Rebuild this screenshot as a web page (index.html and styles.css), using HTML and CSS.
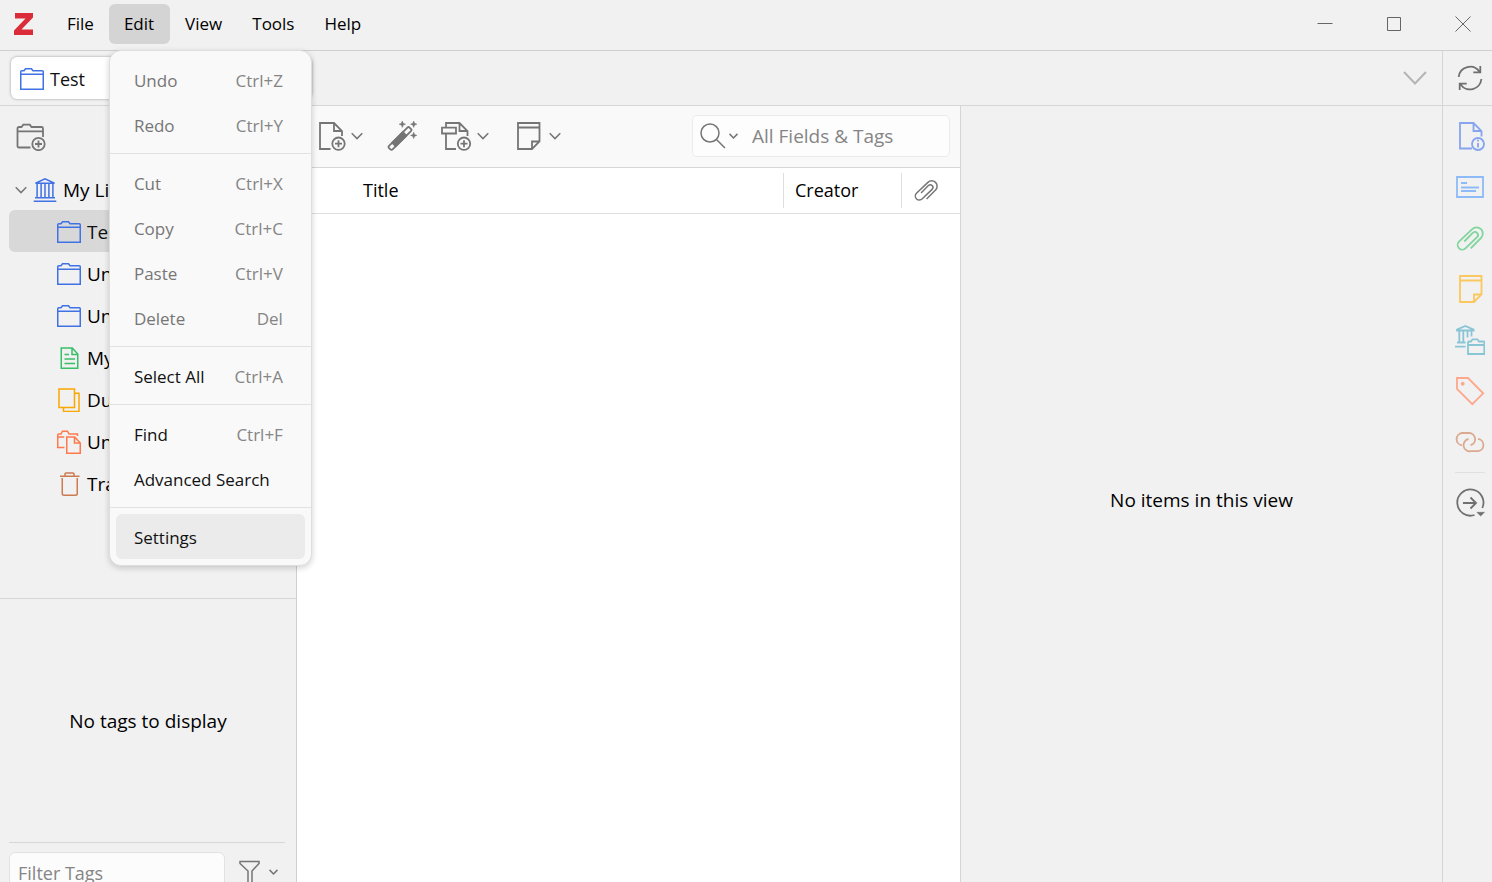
FILE: index.html
```html
<!DOCTYPE html>
<html lang="en">
<head>
<meta charset="utf-8">
<title>Test - Zotero</title>
<link rel="stylesheet" href="styles.css">
</head>
<body>
<svg class="defs" aria-hidden="true">
  <symbol id="chevron" viewBox="0 0 12 8"><path d="M.7 1.2 6 6.6l5.300-5.400"/></symbol>
  <symbol id="folder" viewBox="0 0 24 24"><path d="M.75 22.250V4.750q0-1 1-1H4L5.500 1.750h6L13 3.750h9.250q1 0 1 1v17.500zM.75 7.200h22.500"/></symbol>
  <symbol id="clip" viewBox="0 0 30 30"><path d="M15.700 25.300 26 15A6.200 6.200 0 0 0 17.200 6.200L4 18.700A4.600 4.600 0 0 0 10.700 25.200L22.300 14A3.100 3.100 0 0 0 18 9.600L9.300 18.500"/></symbol>
  <symbol id="note" viewBox="0 0 30 30"><path d="M5 2h21.500v18.500l-7.500 7.500H5zM5 6.500h21.500M26.500 20.500H19V28"/></symbol>
</svg>
<div class="app">
  <header class="titlebar">
    <svg class="logo" viewBox="0 0 20 22" aria-label="Zotero"><path d="M1 0h18v4.500L7.500 16.500H19V22H0v-4.500L11.500 5.500H1z"/></svg>
    <nav class="menubar">
      <button class="menu-button">File</button>
      <div class="menu-anchor">
        <button class="menu-button is-open">Edit</button>
        <div class="menu" role="menu">
          <div class="menu-group">
            <button class="menu-item" role="menuitem" disabled>Undo<kbd>Ctrl+Z</kbd></button>
            <button class="menu-item" role="menuitem" disabled>Redo<kbd>Ctrl+Y</kbd></button>
          </div>
          <div class="menu-group">
            <button class="menu-item" role="menuitem" disabled>Cut<kbd>Ctrl+X</kbd></button>
            <button class="menu-item" role="menuitem" disabled>Copy<kbd>Ctrl+C</kbd></button>
            <button class="menu-item" role="menuitem" disabled>Paste<kbd>Ctrl+V</kbd></button>
            <button class="menu-item" role="menuitem" disabled>Delete<kbd>Del</kbd></button>
          </div>
          <div class="menu-group">
            <button class="menu-item" role="menuitem">Select All<kbd>Ctrl+A</kbd></button>
          </div>
          <div class="menu-group">
            <button class="menu-item" role="menuitem">Find<kbd>Ctrl+F</kbd></button>
            <button class="menu-item" role="menuitem">Advanced Search</button>
          </div>
          <div class="menu-group">
            <button class="menu-item is-active" role="menuitem">Settings</button>
          </div>
        </div>
      </div>
      <button class="menu-button">View</button>
      <button class="menu-button">Tools</button>
      <button class="menu-button">Help</button>
    </nav>
    <div class="window-controls">
      <button class="window-button" aria-label="Minimize"><svg viewBox="0 0 16 16"><path d="M.5 7.500h15"/></svg></button>
      <button class="window-button" aria-label="Maximize"><svg viewBox="0 0 16 16"><path d="M1.500 1.500h13v13h-13z"/></svg></button>
      <button class="window-button" aria-label="Close"><svg viewBox="0 0 16 16"><path d="m.5.5 15 15M15.500.5l-15 15"/></svg></button>
    </div>
  </header>

  <div class="tabbar">
    <div class="tabs">
      <button class="tab"><svg class="icon-24 blue"><use href="#folder"/></svg>Test</button>
      <button class="tab-list" aria-label="List all tabs"><svg viewBox="0 0 24 14"><path d="m1 1 11 11.500L23 1"/></svg></button>
    </div>
    <button class="sync" aria-label="Sync"><svg class="icon-30" viewBox="0 0 30 30"><path d="M3.700 14A11.400 11.400 0 0 1 24.500 8.800M25.300 3v6.300h-7M26.400 16A11.400 11.400 0 0 1 5.500 21.200M4.700 27v-6.300h7"/></svg></button>
  </div>

  <main class="content">
    <aside class="sidebar">
      <div class="sidebar-tools">
        <button class="tool" aria-label="New Collection"><svg class="icon-30" viewBox="0 0 30 30"><path d="M14.500 26.500H3q-1.500 0-1.500-1.500V7.500q0-1.500 1.500-1.500h2.500L7.300 3.700h6.500L15.500 6h10q1.500 0 1.500 1.500v8.500M1.500 10.300H27"/><circle cx="22.500" cy="23" r="6.200"/><path d="M22.500 19.500v7M19 23h7"/></svg></button>
      </div>
      <ul class="tree">
        <li class="row root"><svg class="twisty"><use href="#chevron"/></svg><svg class="icon-24 blue" viewBox="0 0 24 24"><path d="M2.500 5.200 12 .9l9.500 4.300zM4.100 5.500V19M8.100 5.500V19M12 5.500V19M15.900 5.500V19M19.900 5.500V19M2 19.700h20M.7 23.200h22.600"/></svg>My Li</li>
        <li class="row is-selected"><svg class="icon-24 blue"><use href="#folder"/></svg>Tes</li>
        <li class="row"><svg class="icon-24 blue"><use href="#folder"/></svg>Un</li>
        <li class="row"><svg class="icon-24 blue"><use href="#folder"/></svg>Un</li>
        <li class="row"><svg class="icon-24 green" viewBox="0 0 24 24"><path d="M4.250 2h11l5.500 6v14.250H4.250zM15 2v6.500h5.750M7.500 8.500h4.500M7.500 13h10.500M7.500 17.500h10.500"/></svg>My</li>
        <li class="row"><svg class="icon-24 yellow" viewBox="0 0 24 24"><path d="M2 1h15.500v18.500H2zM17.500 5.250h4.500V23.500H6.500v-4"/></svg>Du</li>
        <li class="row"><svg class="icon-24 orange" viewBox="0 0 24 24"><path d="M7.500 17.500H.75V5q0-1 1-1H4L5.500 1.200h5L12 4h8.500v2M.75 7h6.500M9.750 7h8l5.500 6v10.250H9.750zM17.500 7v6h5.750"/></svg>Un</li>
        <li class="row"><svg class="icon-24 brown" viewBox="0 0 24 24"><path d="M3 4.200h19.500M8 4V2q0-1 1-1h7q1 0 1 1v2M5.250 6v15.500q0 1.750 1.750 1.750h11.500q1.750 0 1.750-1.750V6"/></svg>Tra</li>
      </ul>
      <section class="tags">
        <p class="tags-empty">No tags to display</p>
        <div class="tags-filter">
          <input class="field" type="text" placeholder="Filter Tags" aria-label="Filter Tags">
          <button class="filter-button" aria-label="Tag filter options"><svg class="icon-24" viewBox="0 0 24 24"><path d="M2 1.500h19v2L14 11v12l-4 1.500V11L2 3.500z"/></svg><svg class="chevron-small"><use href="#chevron"/></svg></button>
        </div>
      </section>
    </aside>

    <section class="items">
      <div class="toolbar">
        <button class="tool" aria-label="New Item"><svg class="icon-30" viewBox="0 0 30 30"><path d="M12.500 28H2V2h14l8 8v5M16 2v8h8"/><circle cx="20.500" cy="22.700" r="6.200"/><path d="M20.500 19.200v7M17 22.700h7"/></svg><svg class="chevron"><use href="#chevron"/></svg></button>
        <button class="tool" aria-label="Add Item by Identifier"><svg class="icon-30" viewBox="0 0 30 30"><g transform="rotate(-45 13 17.500)"><rect x="-1.500" y="15" width="29" height="5" rx="1.500"/><path class="solid" d="M4.500 15h15v5h-15z"/></g><path class="solid thin" d="m15.300 0 .9 2.300 2.300.9-2.300.9-.9 2.300-.9-2.300-2.300-.9 2.300-.9zM26.700 0l.9 2.300 2.300.9-2.300.9-.9 2.300-.9-2.300-2.300-.9 2.300-.9zM26.700 11.200l.9 2.300 2.300.9-2.300.9-.9 2.300-.9-2.300-2.300-.9 2.300-.9z"/></svg></button>
        <button class="tool" aria-label="Add Attachment"><svg class="icon-33" viewBox="0 0 33 30"><path d="M15 28H5V12.500M5 6.500V2h13.500l8 8v5M18.500 2v8h8M1 6.700h14v5.800H1z"/><circle cx="23" cy="22.700" r="6.200"/><path d="M23 19.200v7M19.500 22.700h7"/></svg><svg class="chevron"><use href="#chevron"/></svg></button>
        <button class="tool" aria-label="New Note"><svg class="icon-33" viewBox="0 0 33 30"><path d="M5 2h21.500v18.500l-7.500 7.500H5zM5 6.500h21.500M26.500 20.500H19V28"/></svg><svg class="chevron"><use href="#chevron"/></svg></button>
        <div class="search">
          <button class="search-mode" aria-label="Search mode"><svg class="search-icon" viewBox="0 0 26 26"><circle cx="10" cy="10" r="9"/><path d="m16.500 16.500 8.500 8.500"/></svg><svg class="chevron-small"><use href="#chevron"/></svg></button>
          <input class="search-input" type="text" placeholder="All Fields &amp; Tags" aria-label="All Fields &amp; Tags">
        </div>
      </div>
      <table class="items-table">
        <thead>
          <tr>
            <th class="col-title" scope="col"><div>Title</div></th>
            <th class="col-creator" scope="col"><div>Creator</div></th>
            <th class="col-clip" scope="col" aria-label="Attachments"><div><svg class="icon-26"><use href="#clip"/></svg></div></th>
          </tr>
        </thead>
      </table>
    </section>

    <section class="details"><p>No items in this view</p></section>

    <nav class="sidenav">
      <button class="nav-button blue" aria-label="Info"><svg class="icon-30" viewBox="0 0 30 30"><path d="M17 27.500H5V2h13.500l8 8v5.500M18.500 2v8h8"/><circle cx="23" cy="23" r="6"/><path d="M23 22v4.500M23 18.800v1.700"/></svg></button>
      <button class="nav-button sky" aria-label="Abstract"><svg class="icon-30" viewBox="0 0 30 30"><path d="M2 5h26v20H2zM6 11h6M6 15.500h18M6 19h15"/></svg></button>
      <button class="nav-button green" aria-label="Attachments"><svg class="icon-30"><use href="#clip"/></svg></button>
      <button class="nav-button yellow" aria-label="Notes"><svg class="icon-30"><use href="#note"/></svg></button>
      <button class="nav-button teal" aria-label="Libraries and Collections"><svg class="icon-30" viewBox="0 0 30 30"><path d="M2 5.500V4.700L10.300 1l8.300 3.700v.8zM4.300 5.500V17M8.300 5.500V17M12.500 5.500v7M16.500 5.500v6M2 17.500h8.500M0 21.700h10.500M13 29V17.500q0-1 1-1h2l1.500-2.200h5L24 16.500h4.300q1 0 1 1V29zM13 20h16.300"/></svg></button>
      <button class="nav-button coral" aria-label="Tags"><svg class="icon-30" viewBox="0 0 30 30"><path d="M2 2h11l15.200 15.300L17.300 28.200 2 13z"/><circle class="solid thin" cx="7.700" cy="7.700" r="1.700"/></svg></button>
      <button class="nav-button tan" aria-label="Related"><svg class="icon-30" viewBox="0 0 30 30"><path d="M7 18.300A6.200 6.200 0 0 1 7 6h7a6.200 6.200 0 0 1 1.500 12.200M13.500 12A6.200 6.200 0 0 0 16 24.200h7A6.200 6.200 0 0 0 23 11.900"/></svg></button>
      <hr class="nav-divider">
      <button class="nav-button" aria-label="Locate"><svg class="icon-30" viewBox="0 0 30 30"><path d="M19.500 27A13.100 13.100 0 1 1 27.300 20M8 15h13M15.500 9.500 21 15l-5.500 5.500"/><path class="solid thin" d="M21.800 24.300h7.700l-3.800 3.700z"/></svg></button>
    </nav>
  </main>
</div>
</body>
</html>
```
FILE: styles.css
```css
* { box-sizing: border-box; }

body {
  margin: 0;
  background: #f1f1f1;
  color: #111;
  font: 18px/24px "Open Sans", "Noto Sans", sans-serif;
}

button, input {
  margin: 0;
  padding: 0;
  border: 0;
  background: none;
  color: inherit;
  font: inherit;
}

p { margin: 0; }

svg {
  display: block;
  flex: none;
  fill: none;
  stroke: currentColor;
  stroke-width: 1.5;
}

.defs { position: absolute; width: 0; height: 0; }
.solid { fill: currentColor; }
.thin { stroke-width: 0.5; }
.icon-24 { width: 24px; height: 24px; }
.icon-26 { width: 26px; height: 26px; stroke-width: 1.7; }
.icon-30 { width: 30px; height: 30px; stroke-width: 1.8; }
.icon-33 { width: 33px; height: 30px; stroke-width: 1.8; }
.chevron, .twisty { width: 12px; height: 8px; }
.chevron-small { width: 9px; height: 6px; stroke-width: 2; }

.blue { color: #4072e5; }
.green { color: #39bf68; }
.yellow { color: #faa700; }
.orange { color: #ff794c; }
.brown { color: #cc7a52; }

.app {
  display: flex;
  flex-direction: column;
  height: 100vh;
  overflow: hidden;
}

/* Title bar */
.titlebar {
  display: flex;
  flex: none;
  align-items: center;
  height: 51px;
  padding: 0 0 2px 14px;
  border-bottom: 1px solid #cfcfcf;
}

.logo { width: 20px; height: 22px; margin-right: 18px; fill: #db2c3a; stroke: none; }
.menubar { display: flex; font-size: 17px; }
.menu-anchor { position: relative; }
.menu-button { height: 40px; padding: 0 15px; border-radius: 6px; color: #000; }
.menu-button.is-open { padding: 0 16px 0 15px; background: #d4d4d4; }

.window-controls { display: flex; gap: 11px; margin-left: auto; }
.window-button { display: grid; place-items: center; width: 58px; height: 40px; color: #666; }
.window-button svg { width: 16px; height: 16px; stroke-width: 1; }

.menu {
  position: absolute;
  z-index: 10;
  top: 46px;
  left: 0;
  width: 203px;
  border: 1px solid #dedede;
  border-radius: 12px;
  background: #f9f9f9;
  box-shadow: 0 2px 6px rgba(0, 0, 0, 0.18);
}

.menu-group { padding: 6px; }
.menu-group + .menu-group { border-top: 1px solid #e2e2e2; }

.menu-item {
  display: flex;
  align-items: center;
  justify-content: space-between;
  width: 100%;
  height: 45px;
  padding: 2px 22px 0 18px;
  border-radius: 6px;
  white-space: nowrap;
}

.menu-item:disabled { color: #767676; }
.menu-item.is-active { background: #ebebeb; }
.menu-item kbd { color: #858585; font: inherit; }

/* Tab bar */
.tabbar { display: flex; flex: none; height: 55px; border-bottom: 1px solid #d6d6d6; }

.tabs {
  display: flex;
  flex: 1;
  align-items: center;
  justify-content: space-between;
  padding: 0 15px 0 11px;
}

.tab {
  display: flex;
  align-items: center;
  gap: 6px;
  width: 301px;
  height: 42px;
  padding: 1px 9px 0;
  border-radius: 6px;
  background: #fff;
  box-shadow: 0 0 3px rgba(0, 0, 0, 0.35);
}

.tab-list { color: #b5b5b5; }
.tab-list svg { width: 24px; height: 14px; stroke-width: 2; }
.sync { width: 50px; padding-left: 12px; border-left: 1px solid #d6d6d6; color: #707070; }

/* Main columns */
.content { display: flex; flex: 1; min-height: 0; }

.sidebar {
  display: flex;
  flex: none;
  flex-direction: column;
  width: 297px;
  border-right: 1px solid #d0d0d0;
  overflow: hidden;
}

.sidebar-tools { display: flex; align-items: center; flex: none; height: 62px; padding: 0 0 2px 16px; }
.tool { display: flex; align-items: center; gap: 3px; color: #757575; }

.tree {
  flex: 1;
  min-height: 0;
  margin: 0;
  padding: 0 9px;
  list-style: none;
  overflow: hidden;
  font-size: 19px;
}

.row {
  display: flex;
  align-items: center;
  gap: 6px;
  height: 42px;
  padding: 2px 0 0 48px;
  border-radius: 6px;
  color: #000;
  white-space: nowrap;
}

.row.root { padding-left: 6px; }
.row.is-selected { background: #d8d8d8; color: #111; }
.twisty { color: #777; }

.tags { flex: none; height: 284px; border-top: 1px solid #d6d6d6; overflow: hidden; }
.tags-empty { display: grid; place-items: center; height: 243px; color: #000; font-size: 19px; }

.tags-filter {
  display: flex;
  align-items: flex-start;
  gap: 13px;
  margin: 0 11px 0 9px;
  padding-top: 9px;
  border-top: 1px solid #d6d6d6;
}

.field {
  flex: 1;
  min-width: 0;
  height: 42px;
  padding: 0 8px;
  border: 1px solid #e2e2e2;
  border-radius: 6px;
  background: #fcfcfc;
}

.filter-button { display: flex; align-items: center; gap: 7px; height: 39px; padding-right: 7px; color: #757575; }
::placeholder { color: #858585; opacity: 1; }

.items {
  display: flex;
  flex: 1;
  flex-direction: column;
  min-width: 0;
  background: #fff;
  border-right: 1px solid #d6d6d6;
}

.toolbar {
  display: flex;
  flex: none;
  align-items: center;
  gap: 24px;
  height: 62px;
  padding: 0 10px 2px 21px;
  border-bottom: 1px solid #d6d6d6;
  background: #f9f9f9;
}

.search {
  display: flex;
  align-items: center;
  width: 258px;
  height: 42px;
  margin-left: auto;
  border: 1px solid #ebebeb;
  border-radius: 5px;
  background: #fdfdfd;
}

.search-mode { display: flex; align-items: center; gap: 3px; padding: 0 14px 0 7px; color: #757575; }
.search-icon { width: 26px; height: 26px; }
.search-input { flex: 1; min-width: 0; height: 40px; font-size: 19px; }

.items-table { width: 100%; border-collapse: collapse; table-layout: fixed; color: #000; }
.items-table th { height: 45px; padding: 0; border-bottom: 1px solid #dedede; font-weight: 400; text-align: left; }
.items-table th div { display: flex; align-items: center; height: 35px; padding-left: 11px; }
.items-table th + th div { border-left: 1px solid #dedede; }
.items-table .col-title div { padding-left: 66px; }
.col-creator { width: 118px; }
.col-clip { width: 59px; color: #757575; }

.details {
  display: grid;
  flex: none;
  place-items: center;
  width: 481px;
  padding-top: 12px;
  color: #000;
  font-size: 19px;
}

.sidenav {
  display: flex;
  flex: none;
  flex-direction: column;
  width: 50px;
  padding-top: 4px;
  border-left: 1px solid #d6d6d6;
}

.nav-button { display: flex; flex: none; align-items: center; height: 51px; padding-left: 12px; color: #707070; }
.nav-button.blue { color: #86a5ee; }
.nav-button.sky { color: #8dbbf8; }
.nav-button.green { color: #81d59d; }
.nav-button.yellow { color: #fbc75f; }
.nav-button.teal { color: #8ac5d6; }
.nav-button.coral { color: #fda78b; }
.nav-button.tan { color: #dba98f; }
.nav-divider { width: 30px; margin: 5px 7px 4px 12px; border: 0; border-top: 1px solid #e0e0e0; }
```
